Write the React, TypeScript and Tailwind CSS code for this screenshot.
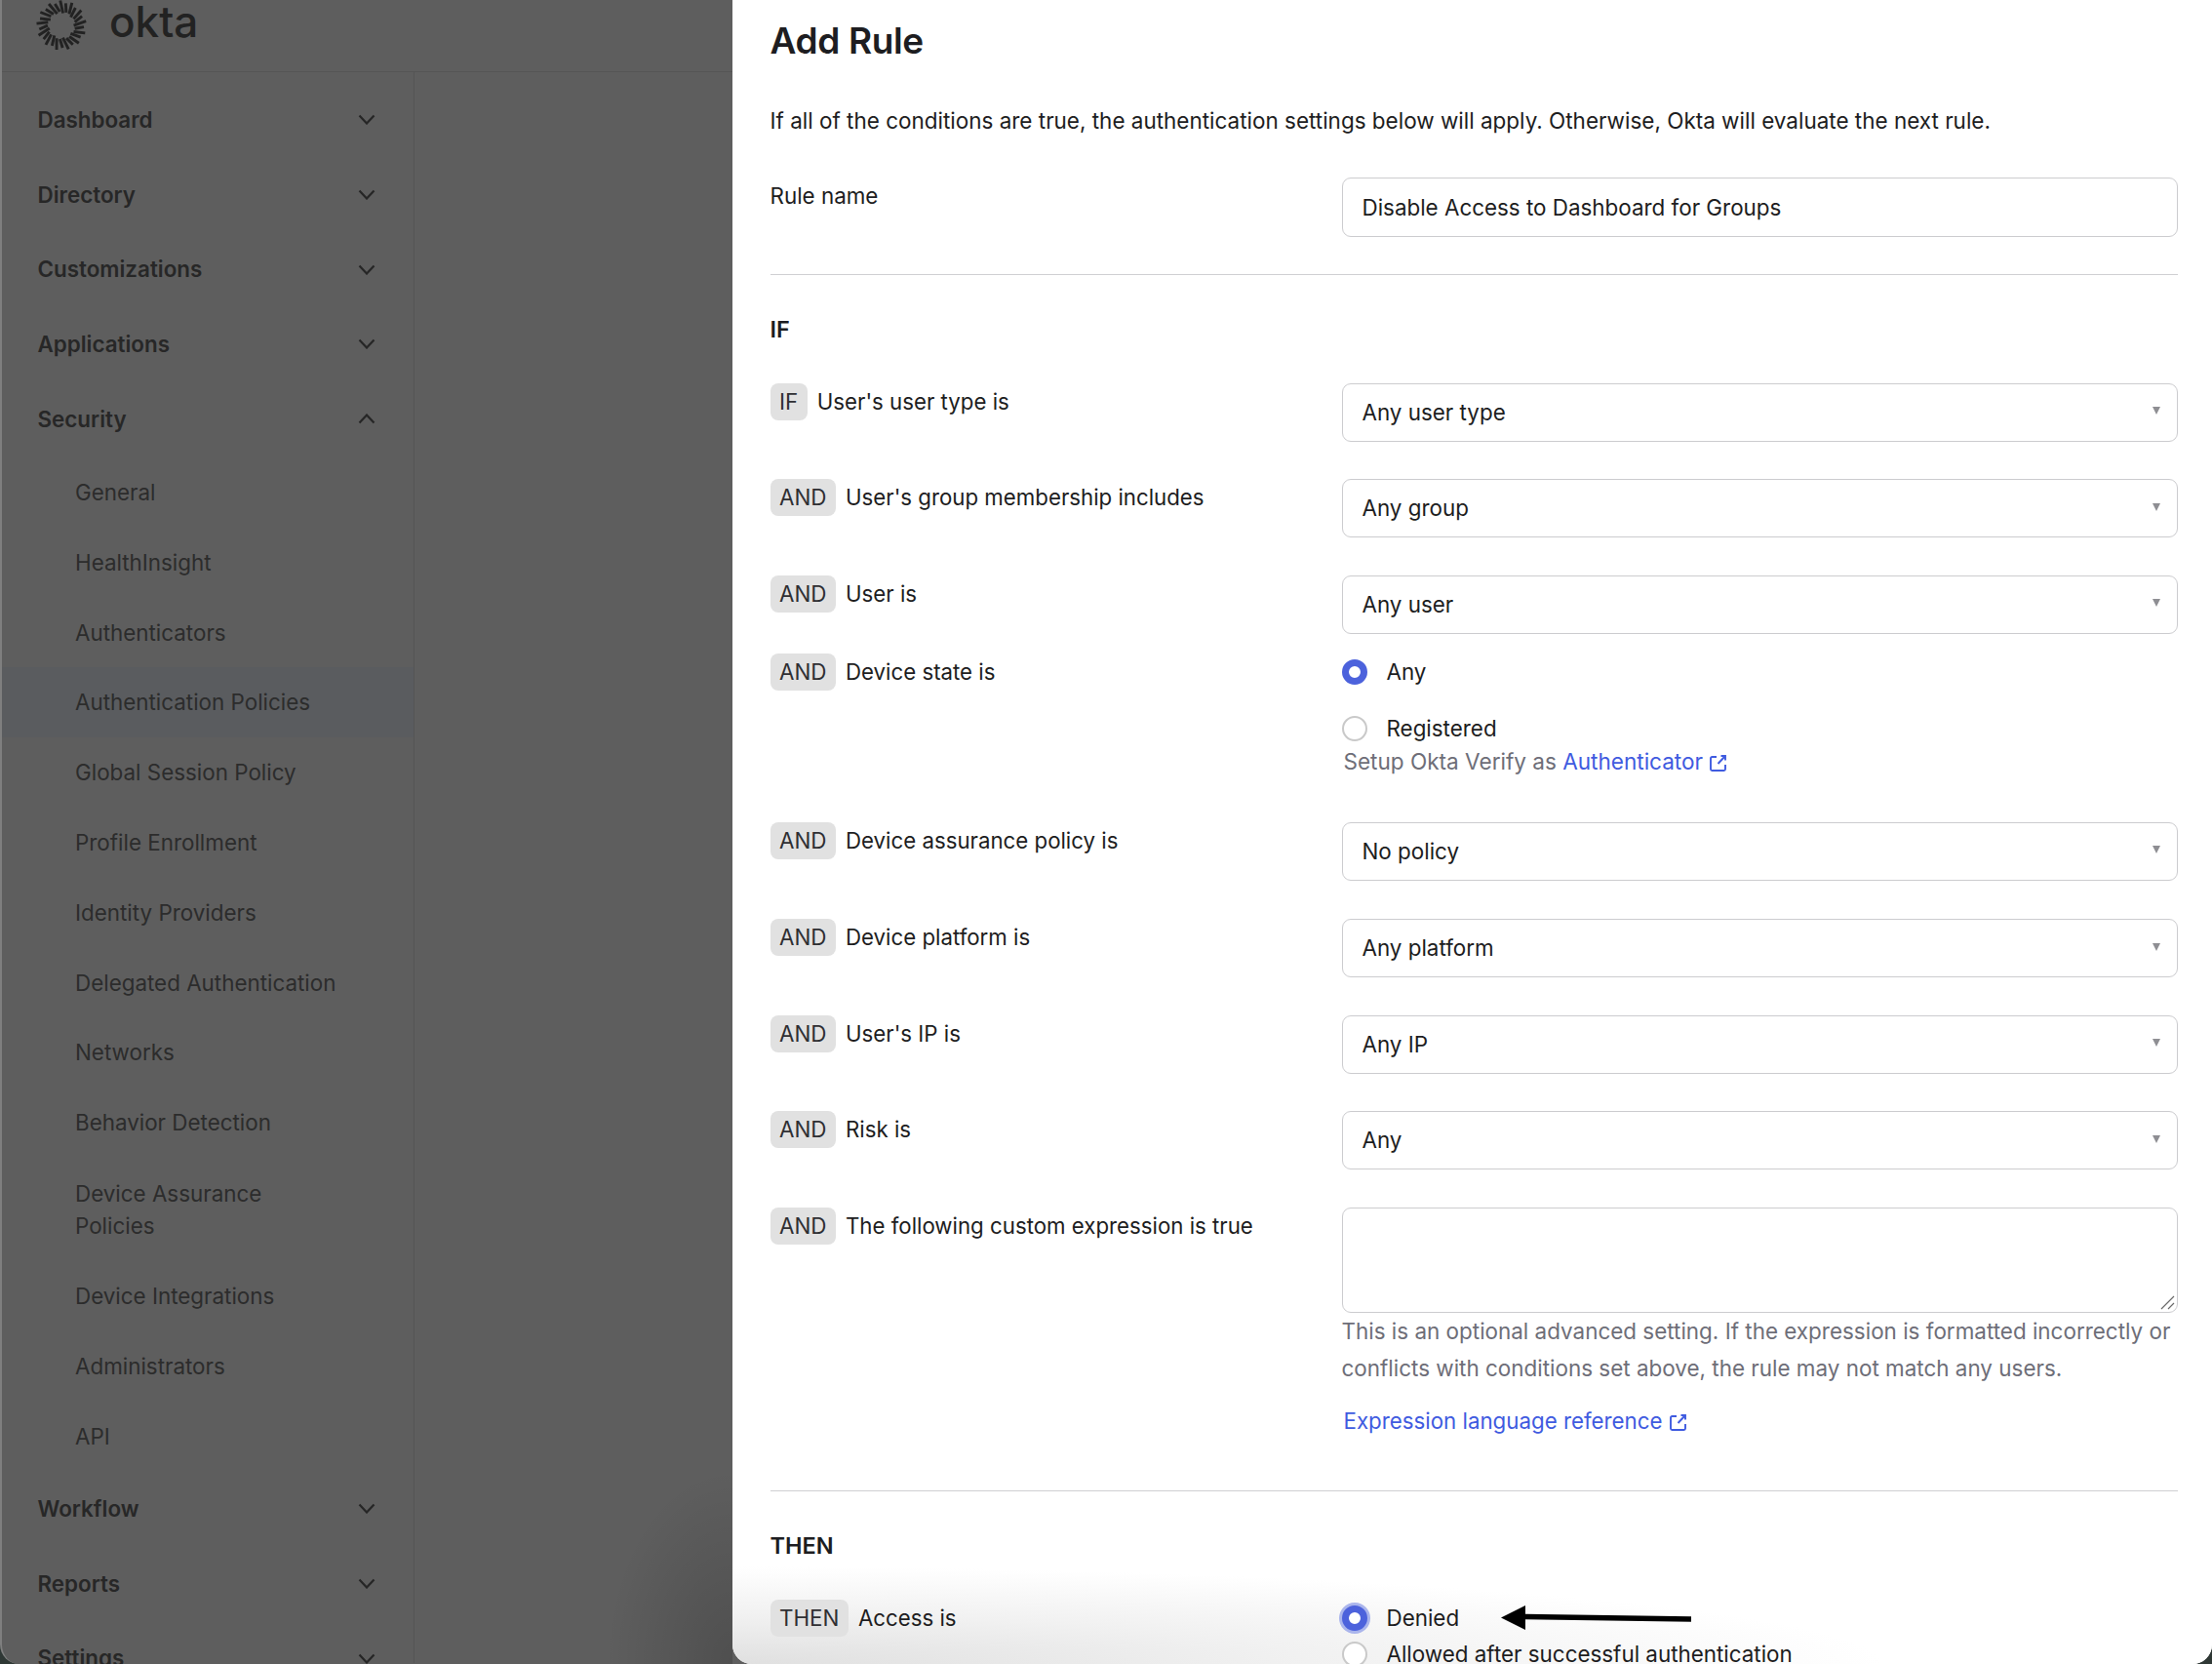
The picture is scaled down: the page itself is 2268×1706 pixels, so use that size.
import React from "react";

const sections1 = ["Dashboard", "Directory", "Customizations", "Applications"];
const subs = [
  "General",
  "HealthInsight",
  "Authenticators",
  "Authentication Policies",
  "Global Session Policy",
  "Profile Enrollment",
  "Identity Providers",
  "Delegated Authentication",
  "Networks",
  "Behavior Detection",
];
const subs2 = ["Device Integrations", "Administrators", "API"];
const sections2 = ["Workflow", "Reports", "Settings"];

function Sun() {
  const rays = Array.from({ length: 26 }, (_, i) => (i * 360) / 26);
  return (
    <svg width="52" height="52" viewBox="-26 -26 52 52" className="shrink-0">
      {rays.map((a, i) => (
        <line
          key={a}
          x1="1.6"
          y1={i % 3 === 0 ? -12.5 : -14}
          x2="-1.2"
          y2={i % 2 === 0 ? -25.5 : -23}
          stroke="#222222"
          strokeWidth="2.9"
          transform={`rotate(${a})`}
        />
      ))}
    </svg>
  );
}

function Chevron({ up }: { up?: boolean }) {
  return (
    <svg width="18" height="11" viewBox="0 0 18 11" fill="none" className={up ? "rotate-180" : ""}>
      <path d="M1.5 1.5 9 9.5l7.5-8" stroke="#262626" strokeWidth="2.2" />
    </svg>
  );
}

function Section({ label, up }: { label: string; up?: boolean }) {
  return (
    <div className="flex h-[76.7px] items-center justify-between pl-[36.5px] pr-[39px] text-[22.4px] font-semibold text-[#272727]">
      <span>{label}</span>
      <Chevron up={up} />
    </div>
  );
}

function Sub({ label, active }: { label: string; active?: boolean }) {
  return (
    <div className={`flex h-[71.8px] items-center pl-[75px] text-[22.4px] text-[#2c2c2c] ${active ? "bg-[#5a5c5f]" : ""}`}>
      {label}
    </div>
  );
}

function Pill({ children }: { children: React.ReactNode }) {
  return (
    <span className="flex h-[38px] shrink-0 items-center rounded-[8px] bg-[#e1e1e1] px-[9.5px] text-[#2f2f33]">{children}</span>
  );
}

function Row({ pill, label, mt, children }: { pill: string; label: string; mt: string; children: React.ReactNode }) {
  return (
    <div className={`grid grid-cols-[586px_1fr] ${mt}`}>
      <div className="flex items-start gap-[10px]">
        <Pill>{pill}</Pill>
        <span className="text-[22.25px] leading-[38px]">{label}</span>
      </div>
      <div>{children}</div>
    </div>
  );
}

function Select({ value }: { value: string }) {
  return (
    <div className="flex h-[60px] items-center justify-between rounded-[9px] border-[1.5px] border-[#cccccf] pl-[20px] pr-[17px]">
      <span>{value}</span>
      <svg width="8" height="8" viewBox="0 0 8 8" className="mb-[3px]">
        <path d="M0 0h8L4 8z" fill="#8e8e93" />
      </svg>
    </div>
  );
}

function Radio({ on, focus }: { on?: boolean; focus?: boolean }) {
  return (
    <span className="flex h-[26px] w-[26px] shrink-0 items-center justify-center">
      <span
        className={`block h-[26px] w-[26px] rounded-full ${
          on ? "border-[7px] border-[#4c62dc] bg-white" : "border-[2.5px] border-[#c9c9c9] bg-white"
        } ${focus ? "shadow-[0_0_0_3px_#aab5ec]" : ""}`}
      />
    </span>
  );
}

function External() {
  return (
    <svg width="20" height="19" viewBox="0 0 20 19" fill="none" className="inline-block align-[-3px]">
      <path
        d="M8 3H3.5A1.5 1.5 0 0 0 2 4.5v11A1.5 1.5 0 0 0 3.5 17h12a1.5 1.5 0 0 0 1.5-1.5V11M9.5 10 16.5 2.5M12.5 2H17v4.5"
        stroke="#3f5be0"
        strokeWidth="1.9"
      />
    </svg>
  );
}

function Rule() {
  return <div className="h-[1.5px] bg-[#cfcfd2]" />;
}

export default function App() {
  return (
    <div className="h-[1706px] w-[2268px] overflow-hidden bg-[#2f3835] font-['Inter',sans-serif]">
      <div className="flex h-[1706px] overflow-hidden rounded-b-[20px] border-l-2 border-[#7f7f7f] bg-[#5e5e5e]">
        <div className="relative w-[749px] shrink-0">
          <div className="pointer-events-none absolute inset-0 bg-[radial-gradient(ellipse_130px_200px_at_100%_100%,rgba(0,0,0,0.16),transparent)]" />
          <header className="flex h-[74px] items-start gap-[23px] border-b border-[#555555] pl-[35px]">
            <Sun />
            <span className="mt-[2px] text-[44px] font-medium leading-[40px] text-[#222222]">okta</span>
          </header>
          <aside className="h-[1631px] w-[422.5px] border-r border-[#555555] pt-[10.3px]">
            {sections1.map((s) => (
              <Section key={s} label={s} />
            ))}
            <div className="mb-[1.2px]">
              <Section label="Security" up />
            </div>
            {subs.map((s) => (
              <Sub key={s} label={s} active={s === "Authentication Policies"} />
            ))}
            <div className="flex h-[106px] items-center pl-[75px] text-[22.4px] leading-[33px] text-[#2c2c2c]">
              Device Assurance
              <br />
              Policies
            </div>
            {subs2.map((s) => (
              <Sub key={s} label={s} />
            ))}
            {sections2.map((s) => (
              <Section key={s} label={s} />
            ))}
          </aside>
        </div>

        <main className="relative flex-1 overflow-hidden rounded-bl-[20px] bg-white pl-[38.5px] pr-[35px] text-[22.4px] text-[#1d1d21]">
          <div className="pointer-events-none absolute inset-0 bg-[radial-gradient(ellipse_1180px_100px_at_0%_100%,#e0e0e0,#f1f1f1_50%,#ffffff)]" />
          <div className="relative">
            <h1 className="mt-[16px] h-[52px] text-[37px] font-semibold leading-[52px] tracking-[-0.01em] text-[#1d1d21]">Add Rule</h1>
            <p className="mt-[38px] text-[22.47px] leading-[36px]">
              If all of the conditions are true, the authentication settings below will apply. Otherwise, Okta will evaluate the next rule.
            </p>
            <div className="mt-[40px] grid grid-cols-[586px_1fr]">
              <label className="leading-[38px]">Rule name</label>
              <div className="flex h-[61px] items-center rounded-[9px] border-[1.5px] border-[#cccccf] pl-[20px]">
                Disable Access to Dashboard for Groups
              </div>
            </div>
            <div className="mt-[37.5px]">
              <Rule />
            </div>
            <h2 className="mt-[38px] text-[23.5px] font-semibold leading-[36px]">IF</h2>

            <Row pill="IF" label="User's user type is" mt="mt-[36.5px]">
              <Select value="Any user type" />
            </Row>
            <Row pill="AND" label="User's group membership includes" mt="mt-[38.5px]">
              <Select value="Any group" />
            </Row>
            <Row pill="AND" label="User is" mt="mt-[38.5px]">
              <Select value="Any user" />
            </Row>
            <Row pill="AND" label="Device state is" mt="mt-[20.5px]">
              <div className="flex h-[38px] items-center gap-[20px]">
                <Radio on />
                <span>Any</span>
              </div>
              <div className="mt-[20px] flex h-[38px] items-center gap-[20px]">
                <Radio />
                <span>Registered</span>
              </div>
              <div className="ml-[2px] text-[22.55px] leading-[30px] text-[#6e6e78]">
                Setup Okta Verify as{" "}
                <span className="text-[#3f5be0]">
                  Authenticator <External />
                </span>
              </div>
            </Row>
            <Row pill="AND" label="Device assurance policy is" mt="mt-[46.5px]">
              <Select value="No policy" />
            </Row>
            <Row pill="AND" label="Device platform is" mt="mt-[39.5px]">
              <Select value="Any platform" />
            </Row>
            <Row pill="AND" label="User's IP is" mt="mt-[38.5px]">
              <Select value="Any IP" />
            </Row>
            <Row pill="AND" label="Risk is" mt="mt-[38.5px]">
              <Select value="Any" />
            </Row>
            <Row pill="AND" label="The following custom expression is true" mt="mt-[38.5px]">
              <div className="relative">
                <textarea
                  readOnly
                  className="block h-[108px] w-full resize-none rounded-[9px] border-[1.5px] border-[#cccccf] bg-white"
                />
                <svg width="15" height="15" viewBox="0 0 15 15" fill="none" className="absolute bottom-[3px] right-[3px]" aria-hidden="true">
                  <path d="M1 14 14 1M8 14l6-6" stroke="#6a6a6a" strokeWidth="1.2" />
                </svg>
              </div>
              <p className="text-[22.45px] leading-[38.5px] text-[#6e6e78]">
                This is an optional advanced setting. If the expression is formatted incorrectly or conflicts with conditions set above, the rule may not match any users.
              </p>
              <div className="ml-[2px] mt-[16px] text-[22.3px] leading-[36px] text-[#3f5be0]">
                Expression language reference <External />
              </div>
            </Row>
            <div className="mt-[53px]">
              <Rule />
            </div>
            <h2 className="mt-[38px] text-[23.5px] font-semibold leading-[36px]">THEN</h2>
            <Row pill="THEN" label="Access is" mt="mt-[36.5px]">
              <div className="flex h-[38px] items-center gap-[20px]">
                <Radio on focus />
                <span>Denied</span>
                <svg width="195" height="26" viewBox="0 0 195 26" className="ml-[23px]" aria-hidden="true">
                  <path d="M0 12.5 25 0v25z" fill="#000000" />
                  <path d="M24 11.5 195 14" stroke="#000000" strokeWidth="5.5" />
                </svg>
              </div>
              <div className="flex h-[36px] items-center gap-[20px]">
                <Radio />
                <span>Allowed after successful authentication</span>
              </div>
            </Row>
          </div>
        </main>
      </div>
    </div>
  );
}
